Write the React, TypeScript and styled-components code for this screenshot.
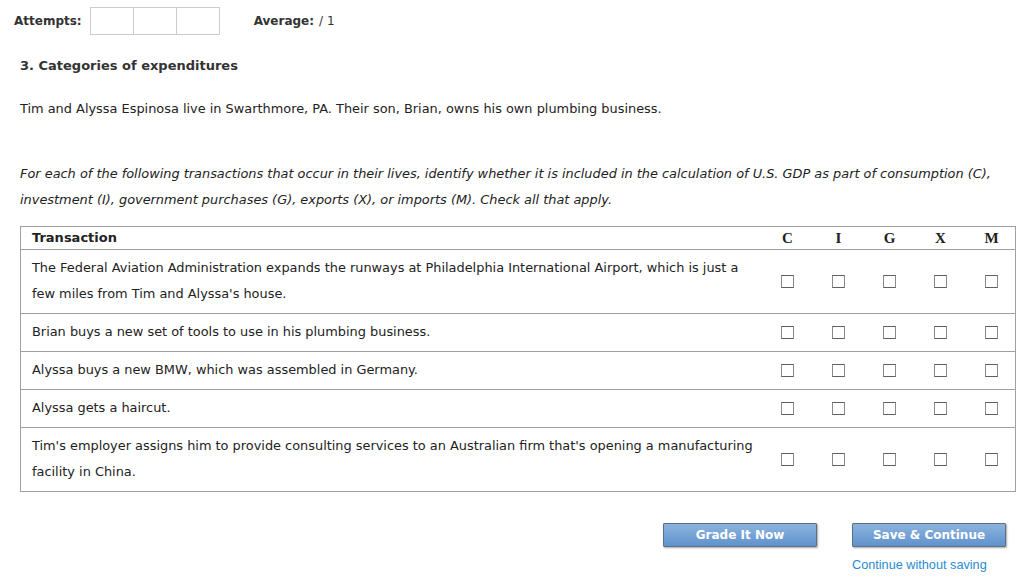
import React, { FC } from 'react';
import styled, { createGlobalStyle } from 'styled-components';

const GlobalStyle = createGlobalStyle`
  body {
    margin: 0;
    background: #ffffff;
    font-family: 'DejaVu Sans', Verdana, sans-serif;
    font-size: 12.9px;
    color: #222222;
  }
`;

const columns = ['C', 'I', 'G', 'X', 'M'];

const rows = [
  "The Federal Aviation Administration expands the runways at Philadelphia International Airport, which is just a few miles from Tim and Alyssa's house.",
  'Brian buys a new set of tools to use in his plumbing business.',
  'Alyssa buys a new BMW, which was assembled in Germany.',
  'Alyssa gets a haircut.',
  "Tim's employer assigns him to provide consulting services to an Australian firm that's opening a manufacturing facility in China.",
];

const App: FC = () => {
  return (
    <Page>
      <GlobalStyle />
      <ScoreBar>
        <ScoreLabel>Attempts:</ScoreLabel>
        <AttemptBoxes>
          <AttemptBox />
          <AttemptBox />
          <AttemptBox />
        </AttemptBoxes>
        <ScoreLabel $tight>Average:</ScoreLabel>
        <ScoreValue>/ 1</ScoreValue>
      </ScoreBar>

      <Question>
        <Title>3. Categories of expenditures</Title>
        <Intro>
          Tim and Alyssa Espinosa live in Swarthmore, PA. Their son, Brian, owns his own plumbing business.
        </Intro>
        <Instructions>
          For each of the following transactions that occur in their lives, identify whether it is included in the
          calculation of U.S. GDP as part of consumption (C), investment (I), government purchases (G), exports (X), or
          imports (M). Check all that apply.
        </Instructions>

        <Table>
          <thead>
            <tr>
              <HeadCell>Transaction</HeadCell>
              {columns.map((c) => (
                <LetterCell key={c}>{c}</LetterCell>
              ))}
            </tr>
          </thead>
          <tbody>
            {rows.map((text, i) => (
              <tr key={i}>
                <TextCell>{text}</TextCell>
                {columns.map((c) => (
                  <CheckCell key={c}>
                    <Check type="checkbox" aria-label={c} />
                  </CheckCell>
                ))}
              </tr>
            ))}
          </tbody>
        </Table>
      </Question>

      <Actions>
        <Button>Grade It Now</Button>
        <SaveGroup>
          <Button>Save &amp; Continue</Button>
          <SkipLink href="#">Continue without saving</SkipLink>
        </SaveGroup>
      </Actions>
    </Page>
  );
};

const Page = styled.div`
  width: 1024px;
  height: 583px;
  overflow: hidden;
  box-sizing: border-box;
  padding-top: 7px;
`;

const ScoreBar = styled.div`
  display: flex;
  align-items: center;
  padding-left: 14px;
  height: 28px;
`;

const ScoreLabel = styled.span<{ $tight?: boolean }>`
  font-weight: bold;
  font-size: 12px;
  color: #333333;
  margin-right: ${(p) => (p.$tight ? '5px' : '8px')};
`;

const ScoreValue = styled.span`
  font-size: 12px;
  color: #333333;
`;

const AttemptBoxes = styled.div`
  display: flex;
  margin-right: 34px;
`;

const AttemptBox = styled.div`
  width: 42px;
  height: 26px;
  border: 1px solid #cccccc;
  & + & {
    border-left: none;
  }
`;

const Question = styled.div`
  padding: 0 8px 0 20px;
`;

const Title = styled.h3`
  margin: 22px 0 0;
  font-size: 13px;
  font-weight: bold;
  color: #333333;
  line-height: 18px;
`;

const Intro = styled.p`
  margin: 25px 0 0;
  line-height: 18px;
`;

const Instructions = styled.p`
  margin: 43px 0 0;
  font-style: italic;
  line-height: 26px;
`;

const Table = styled.table`
  margin-top: 13px;
  width: 996px;
  border-collapse: collapse;
  border: 1px solid #a0a0a0;
`;

const HeadCell = styled.th`
  text-align: left;
  font-weight: bold;
  font-size: 13px;
  padding: 2px 6px 2px 11px;
  line-height: 18px;
  border-bottom: 1px solid #a0a0a0;
`;

const LetterCell = styled.th`
  width: 47px;
  padding: 2px 0 2px 4px;
  text-align: center;
  font-family: 'Liberation Serif', 'Times New Roman', serif;
  font-weight: bold;
  font-size: 15px;
  line-height: 18px;
  border-bottom: 1px solid #a0a0a0;
`;

const TextCell = styled.td`
  padding: 5px 4px 6px 11px;
  line-height: 26px;
  border-top: 1px solid #a0a0a0;
  vertical-align: middle;
`;

const CheckCell = styled.td`
  padding: 0 0 0 4px;
  text-align: center;
  vertical-align: middle;
  border-top: 1px solid #a0a0a0;
`;

const Check = styled.input`
  appearance: none;
  display: block;
  margin: 0 auto;
  width: 13px;
  height: 13px;
  border: 1px solid #606060;
  border-left-color: #8a8a8a;
  border-right-color: #8a8a8a;
  background: #ffffff;
  box-sizing: border-box;
`;

const Actions = styled.div`
  display: flex;
  justify-content: flex-end;
  gap: 35px;
  padding: 31px 18px 0 0;
`;

const SaveGroup = styled.div`
  display: flex;
  flex-direction: column;
  align-items: flex-start;
  gap: 11px;
`;

const Button = styled.button`
  width: 154px;
  height: 24px;
  padding: 0;
  border: 1px solid #5b6f86;
  border-radius: 1px;
  background: linear-gradient(#8cb3de, #5f92cb);
  box-shadow: 1px 1px 2px rgba(0, 0, 0, 0.35);
  color: #ffffff;
  font-family: 'DejaVu Sans', Verdana, sans-serif;
  font-weight: bold;
  font-size: 12px;
  cursor: pointer;
`;

const SkipLink = styled.a`
  font-family: 'Liberation Sans', Arial, sans-serif;
  font-size: 12.7px;
  color: #2a8bd1;
  text-decoration: none;
`;

export default App;
